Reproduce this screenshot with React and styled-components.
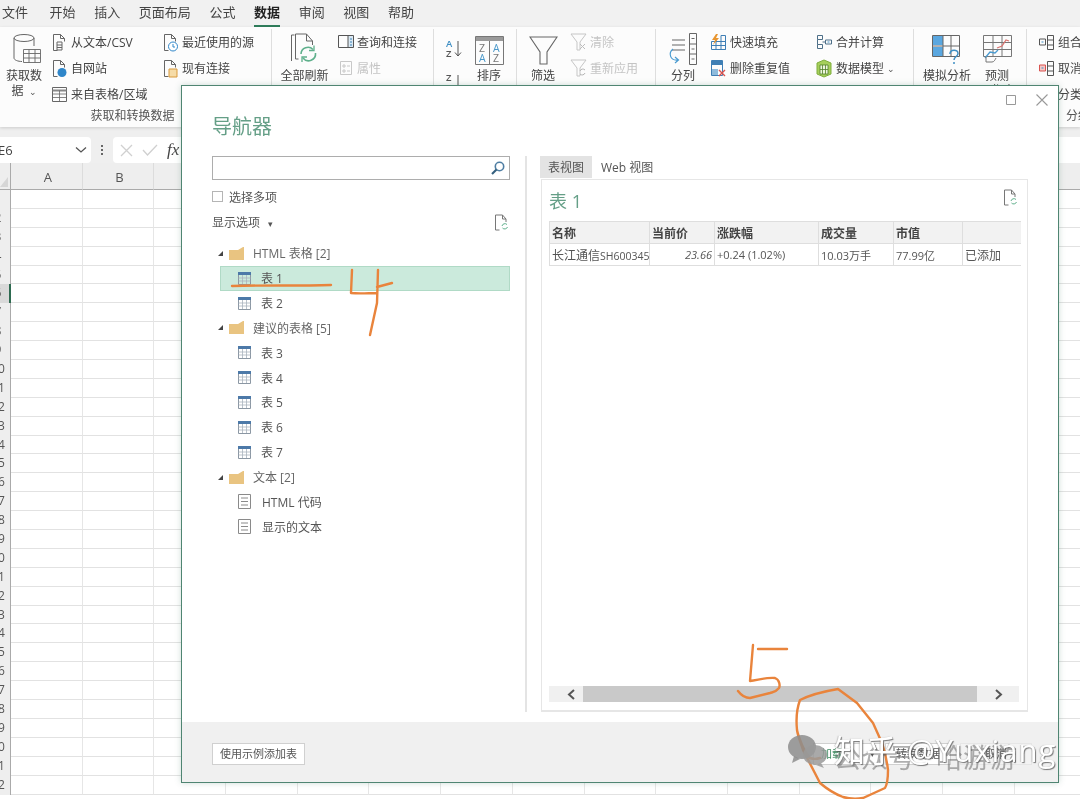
import React from "react";
import styled, { createGlobalStyle } from "styled-components";

const GlobalStyle = createGlobalStyle`
  html, body { margin: 0; padding: 0; background: #fff; }
  body {
    font-family: "Open Sans", "Noto Sans CJK SC", sans-serif;
    font-size: 12px;
    color: #444;
  }
`;

const Page = styled.div`
  position: relative;
  width: 1080px;
  height: 799px;
  overflow: hidden;
  display: flex;
  flex-direction: column;
  background: #fff;
  filter: blur(0.4px);
`;

/* menu tabs */
const TabBar = styled.div`
  height: 27px;
  flex: none;
  display: flex;
  align-items: flex-start;
  gap: 18.6px;
  padding-left: 2px;
  background: #f1f1f1;
`;
const Tab = styled.div`
  height: 25px;
  line-height: 24px;
  font-size: 13px;
  color: ${(p) => (p.$active ? "#222" : "#444")};
  font-weight: ${(p) => (p.$active ? 700 : 400)};
  border-bottom: ${(p) => (p.$active ? "2px solid #2f7d5b" : "2px solid transparent")};
  &:first-child { margin-right: 3px; }
`;

/* ribbon */
const Ribbon = styled.div`
  height: 100px;
  flex: none;
  display: flex;
  padding-top: 2px;
  box-sizing: border-box;
  background: #fcfcfc;
  overflow: hidden;
  box-shadow: 0 1px 3px rgba(0, 0, 0, 0.15);
  position: relative;
`;
const Group = styled.div`
  width: ${(p) => p.$w}px;
  flex: none;
  display: flex;
  flex-direction: column;
  border-right: 1px solid #dedede;
  box-sizing: border-box;
  &:last-child { border-right: none; }
`;
const GroupBody = styled.div`
  height: 78px;
  display: flex;
  padding-left: ${(p) => p.$pad || 0}px;
`;
const GroupLabel = styled.div`
  height: 18px;
  line-height: 18px;
  text-align: center;
  padding-right: ${(p) => p.$shift || 0}px;
  color: #555;
  white-space: nowrap;
`;
const BigButton = styled.div`
  width: ${(p) => p.$w || 40}px;
  margin-left: ${(p) => p.$ml || 0}px;
  flex: none;
  text-align: center;
  line-height: 15px;
  color: #444;
`;
const BigIcon = styled.div`
  height: 36px;
  padding-bottom: 3px;
  display: flex;
  align-items: flex-end;
  justify-content: center;
`;
const SmallCol = styled.div`
  width: ${(p) => p.$w}px;
  margin-left: ${(p) => p.$ml || 0}px;
  flex: none;
`;
const SmallItem = styled.div`
  height: 26px;
  display: flex;
  align-items: center;
  white-space: nowrap;
  padding-left: ${(p) => p.$indent || 0}px;
  color: ${(p) => (p.$off ? "#c4c4c4" : "#444")};
`;
const IconSlot = styled.span`
  width: ${(p) => p.$w || 17}px;
  margin-right: 3px;
  flex: none;
  display: flex;
  justify-content: center;
`;
const SortSlot = styled.div`
  height: 34px;
  padding-top: 5px;
  box-sizing: border-box;
  display: flex;
  align-items: center;
  justify-content: center;
`;
const Caret = styled.span`
  display: inline-block;
  margin-left: ${(p) => p.$ml || 5}px;
  font-size: 9px;
  color: #555;
`;

/* formula bar + sheet */
const FormulaBar = styled.div`
  height: 36px;
  flex: none;
  display: flex;
  align-items: flex-end;
  background: #efefef;
`;
const NameBox = styled.div`
  width: 91px;
  height: 26px;
  flex: none;
  box-sizing: border-box;
  background: #fff;
  border-radius: 0 4px 4px 0;
  display: flex;
  align-items: center;
  justify-content: space-between;
  padding-right: 4px;
  font-size: 13px;
  color: #444;
  overflow: hidden;
`;
const NameText = styled.span`
  margin-left: -2px;
`;
const Dots = styled.div`
  width: 22px;
  height: 26px;
  flex: none;
  display: flex;
  flex-direction: column;
  align-items: center;
  justify-content: center;
  gap: 2px;
  span { width: 2px; height: 2px; background: #666; }
`;
const FormulaBox = styled.div`
  flex: 1;
  height: 26px;
  background: #fff;
  border-radius: 4px 0 0 4px;
  display: flex;
  align-items: center;
  gap: 9px;
  padding-left: 7px;
`;
const Fx = styled.span`
  font-family: "Liberation Serif", serif;
  font-style: italic;
  font-size: 17px;
  color: #444;
`;
const Sheet = styled.div`
  flex: 1;
  display: grid;
  grid-template-columns: 11px repeat(15, 71.7px);
  grid-template-rows: 27px;
  grid-auto-rows: 18.9px;
  overflow: hidden;
`;
const Corner = styled.div`
  background: #eee;
  border-right: 1px solid #aaa;
  border-bottom: 1px solid #aaa;
  box-sizing: border-box;
  display: flex;
  align-items: flex-end;
  padding-bottom: 2px;
  &::before {
    content: "";
    border-style: solid;
    border-width: 0 0 10px 8px;
    border-color: transparent transparent #d6d6d6 transparent;
  }
`;
const ColHead = styled.div`
  background: #eee;
  border-right: 1px solid #dcdcdc;
  border-bottom: 1px solid #aaa;
  box-sizing: border-box;
  text-align: center;
  line-height: 29px;
  padding-left: 3px;
  font-size: 13px;
  color: #555;
`;
const RowHead = styled.div`
  background: ${(p) => (p.$active ? "#d9d9d9" : "#eee")};
  border-right: ${(p) => (p.$active ? "2px solid #2d6a50" : "1px solid #aaa")};
  box-sizing: border-box;
  overflow: hidden;
`;
const RowNum = styled.div`
  width: 26px;
  margin-left: -15px;
  text-align: center;
  line-height: 18px;
  color: #555;
`;
const Cell = styled.div`
  border-right: 1px solid #e6e6e6;
  border-bottom: 1px solid #e2e2e2;
  box-sizing: border-box;
`;

/* navigator dialog */
const Dialog = styled.div`
  position: absolute;
  left: 181px;
  top: 85px;
  width: 878px;
  height: 698px;
  box-sizing: border-box;
  border: 1px solid #4f8572;
  background: #fff;
  box-shadow: 0 0 6px rgba(60, 110, 90, 0.25);
  display: flex;
  flex-direction: column;
`;
const WindowButtons = styled.div`
  position: absolute;
  top: 8px;
  right: 10px;
  display: flex;
  gap: 20px;
  align-items: center;
`;
const DialogMain = styled.div`
  flex: 1;
  padding: 27px 0 10px 30px;
  display: flex;
  flex-direction: column;
  min-height: 0;
`;
const DialogTitle = styled.div`
  height: 28px;
  line-height: 28px;
  font-size: 20px;
  color: #659f87;
  margin-bottom: 15px;
`;
const Panes = styled.div`
  flex: 1;
  display: flex;
  min-height: 0;
`;
const LeftPane = styled.div`
  width: 298px;
  flex: none;
`;
const PaneDivider = styled.div`
  width: 2px;
  margin: 0 15px;
  flex: none;
  background: #e4e4e4;
`;
const RightPane = styled.div`
  width: 487px;
  margin-left: -1px;
  flex: none;
  display: flex;
  flex-direction: column;
`;
const SearchBox = styled.div`
  height: 24px;
  box-sizing: border-box;
  border: 1px solid #adadad;
  display: flex;
  align-items: center;
  justify-content: flex-end;
  padding-right: 3px;
`;
const CheckRow = styled.div`
  height: 19px;
  margin-top: 7px;
  display: flex;
  align-items: center;
  gap: 6px;
  color: #555;
`;
const CheckBox = styled.span`
  width: 11px;
  height: 11px;
  box-sizing: border-box;
  border: 1px solid #b5b5b5;
  background: #fff;
`;
const OptionsRow = styled.div`
  height: 20px;
  margin-top: 6px;
  display: flex;
  align-items: center;
  justify-content: space-between;
  padding-right: 1px;
  color: #555;
`;
const Tree = styled.div`
  margin-top: 9px;
`;
const FolderRow = styled.div`
  height: 24.85px;
  display: flex;
  align-items: center;
  padding-left: 6px;
  color: #666;
`;
const FolderLabel = styled.span`
  margin-left: 9px;
`;
const Tri = styled.span`
  border-style: solid;
  border-width: 0 0 5px 5px;
  border-color: transparent transparent #444 transparent;
  margin-right: 6px;
`;
const LeafRow = styled.div`
  height: 24.85px;
  box-sizing: border-box;
  margin-left: 8px;
  display: flex;
  align-items: center;
  padding-left: 17px;
  gap: 10px;
  color: #555;
  background: ${(p) => (p.$selected ? "#cbeadc" : "transparent")};
  border: 1px solid ${(p) => (p.$selected ? "#b0dac6" : "transparent")};
`;
const ViewTabs = styled.div`
  height: 23px;
  margin-left: -1px;
  display: flex;
  flex: none;
`;
const ViewTab = styled.div`
  height: 22px;
  line-height: 23px;
  padding: 0 ${(p) => (p.$active ? "8px" : "9px")};
  background: ${(p) => (p.$active ? "#e3e3e3" : "transparent")};
  color: #555;
`;
const Preview = styled.div`
  flex: 1;
  border: 1px solid #e6e6e6;
  border-bottom-width: 2px;
  display: flex;
  flex-direction: column;
  padding: 9px 8px 8px 7px;
  min-height: 0;
`;
const PreviewHead = styled.div`
  height: 32px;
  display: flex;
  justify-content: space-between;
  align-items: flex-start;
  padding-right: 1px;
`;
const PreviewTitle = styled.div`
  font-size: 18px;
  line-height: 24px;
  color: #659f87;
`;
const DataTable = styled.table`
  width: 471px;
  border-collapse: collapse;
  table-layout: fixed;
`;
const Th = styled.th`
  height: 21px;
  padding: 0 2px;
  background: #f2f2f2;
  border: 1px solid #dedede;
  border-left: ${(p) => (p.$first ? "1px solid #dedede" : "none")};
  border-right: ${(p) => (p.$last ? "none" : "1px solid #dedede")};
  text-align: left;
  font-weight: 700;
  font-size: 12px;
  color: #444;
`;
const Td = styled.td`
  height: 21px;
  padding: 0 2px;
  border-bottom: 1px solid #dedede;
  border-left: ${(p) => (p.$first ? "1px solid #dedede" : "none")};
  border-right: ${(p) => (p.$last ? "none" : "1px solid #dedede")};
  white-space: nowrap;
  overflow: hidden;
  color: #555;
  font-size: ${(p) => p.$size || 12}px;
  text-align: ${(p) => (p.$num ? "right" : "left")};
  font-style: ${(p) => (p.$num ? "italic" : "normal")};
`;
const Ticker = styled.span`
  font-size: 10.5px;
`;
const ScrollBar = styled.div`
  margin-top: auto;
  height: 16px;
  width: 470px;
  flex: none;
  display: flex;
  align-items: stretch;
  background: #f0f0f0;
`;
const ScrollArrow = styled.div`
  width: ${(p) => p.$w}px;
  flex: none;
  display: flex;
  align-items: center;
  justify-content: ${(p) => (p.$right ? "center" : "flex-end")};
  padding-right: ${(p) => (p.$right ? 0 : 7)}px;
  box-sizing: border-box;
`;
const ScrollThumb = styled.div`
  flex: 1;
  background: #c9c9c9;
`;
const DialogFooter = styled.div`
  height: 60px;
  flex: none;
  box-sizing: border-box;
  background: #f0f0f0;
  display: flex;
  align-items: center;
  padding: 4px 23px 0 30px;
`;
const FooterButton = styled.div`
  height: 22px;
  box-sizing: border-box;
  border: 1px solid ${(p) => (p.$flat ? "#e6e6e6" : "#d0d0d0")};
  background: ${(p) => (p.$flat ? "#f3f3f3" : "#fff")};
  line-height: 20px;
  font-size: 11px;
  text-align: center;
  width: ${(p) => p.$w}px;
  margin-left: ${(p) => p.$ml || 0}px;
  color: ${(p) => (p.$primary ? "#3c8a60" : "#555")};
  display: flex;
  align-items: center;
  justify-content: center;
  gap: 22px;
`;

/* things laid over the screenshot */
const Marks = styled.svg`
  position: absolute;
  left: 0;
  top: 0;
  pointer-events: none;
`;
const Watermark = styled.div`
  position: absolute;
  left: 787px;
  top: 733px;
  width: 280px;
  height: 44px;
  pointer-events: none;
`;
const WatermarkGrey = styled.div`
  position: absolute;
  left: 47px;
  top: 7px;
  font-size: 27px;
  line-height: 36px;
  white-space: nowrap;
  color: rgba(110, 110, 110, 0.55);
`;
const WatermarkWhite = styled.div`
  position: absolute;
  left: 47px;
  top: -3px;
  font-size: 31px;
  line-height: 40px;
  letter-spacing: 1px;
  white-space: nowrap;
  color: #fff;
  text-shadow: 1px 1px 1px rgba(80, 80, 80, 0.75), -1px 0 1px rgba(120, 120, 120, 0.35);
`;

/* icons */
const Doc = ({ children }) => (
  <svg width="17" height="19" viewBox="0 0 17 19" fill="none">
    <path d="M2.5 17.5v-16h7l4 4v3M9.5 1.5v4h4M2.5 17.5h4" stroke="#666" />
    {children}
  </svg>
);
const DatabaseIcon = () => (
  <svg width="36" height="32" viewBox="-6 0 36 32" fill="none" stroke="#666">
    <ellipse cx="12" cy="5" rx="10" ry="3.5" />
    <path d="M2 5v20c0 2 4 3.5 8 3.5M22 5v8" />
    <path d="M11.5 16.5h17v13h-17zM11.5 20.500h17M17 16.500v13M23 16.500v13M11.500 25h17" strokeWidth=".9" />
  </svg>
);
const TableAreaIcon = () => (
  <svg width="17" height="17" viewBox="0 0 17 17" fill="none" stroke="#666">
    <path d="M1.500 1.500h14v14h-14z" />
    <path d="M1.500 4.500h14" stroke="#888" strokeWidth="2" />
    <path d="M1.500 8h14M1.500 11.500h14M8.500 4.500v11" strokeWidth=".8" />
  </svg>
);
const RefreshIcon = () => (
  <svg width="32" height="32" viewBox="0 0 32 32" fill="none">
    <path d="M2.500 28v-26h3" stroke="#666" />
    <path d="M6.500 26v-25h11l6 7v4M17.500 1v7h6M6.500 26h3" stroke="#666" />
    <path d="M12 21a7 7 0 0 1 12-4.500M26.500 20a7 7 0 0 1-12.500 5" stroke="#5fb08c" strokeWidth="1.600" />
    <path d="M25 12.500v5h-5M13 29v-5h5" stroke="#5fb08c" strokeWidth="1.300" />
  </svg>
);
const QueryIcon = () => (
  <svg width="16" height="14" viewBox="0 0 16 14" fill="none">
    <path d="M.5.500h15v12h-15z" stroke="#555" />
    <path d="M10 1h5v11h-5z" fill="#d9e8f3" />
    <path d="M10 .5v12" stroke="#555" />
    <path d="M12 4h2M12 7h2M12 10h2" stroke="#3b82b8" />
  </svg>
);
const PropsIcon = () => (
  <svg width="14" height="16" viewBox="0 0 14 16" fill="none" stroke="#c8c8c8">
    <path d="M1.500 1.500h11v13h-11z" />
    <path d="M4 5h2v2h-2zM4 10h2v2h-2zM8 6h3M8 11h3" />
  </svg>
);
const SortAzIcon = ({ flip }) => (
  <svg width="17" height="20" viewBox="0 0 17 20" fontFamily="Open Sans, sans-serif" fontSize="9.500" fontWeight="600">
    <text x="0" y="8" fill={flip ? "#555" : "#3f8fc4"}>{flip ? "Z" : "A"}</text>
    <text x="0" y="18" fill={flip ? "#3f8fc4" : "#555"}>{flip ? "A" : "Z"}</text>
    <path d="M12 2v15M9 13.500l3 3.500 3-3.500" stroke="#555" fill="none" />
  </svg>
);
const SortBigIcon = () => (
  <svg width="29" height="29" viewBox="0 0 29 29" fill="none" fontFamily="Open Sans, sans-serif" fontSize="10.500">
    <path d="M.5.500h28v28h-28z" stroke="#777" />
    <path d="M1 1h27v4h-27z" fill="#9a9a9a" />
    <path d="M14.500 5v23" stroke="#777" />
    <text x="4" y="15.500" fill="#777">Z</text>
    <text x="4" y="26" fill="#4a98ca">A</text>
    <text x="18" y="15.500" fill="#4a98ca">A</text>
    <text x="18" y="26" fill="#777">Z</text>
  </svg>
);
const FunnelIcon = () => (
  <svg width="29" height="29" viewBox="0 0 29 29" fill="none" stroke="#666" strokeWidth="1.100">
    <path d="M1 1h27l-10 15v12h-7v-12z" />
  </svg>
);
const ClearFilterIcon = () => (
  <svg width="17" height="18" viewBox="0 0 17 18" fill="none" stroke="#c6c6c6">
    <path d="M1 1h15l-6 8v8h-3v-8z" />
    <path d="M10 11l5 5M15 11l-5 5" stroke="#bdbdbd" />
  </svg>
);
const ReapplyIcon = () => (
  <svg width="17" height="18" viewBox="0 0 17 18" fill="none" stroke="#c6c6c6">
    <path d="M1 1h15l-6 8v8h-3v-8z" />
    <path d="M10 12a3 3 0 0 1 5-1M15 14a3 3 0 0 1-5 1" stroke="#b4b4b4" />
  </svg>
);
const SplitIcon = () => (
  <svg width="30" height="33" viewBox="0 0 30 33" fill="none">
    <path d="M4 8h13M4 13h13M4 18h13" stroke="#666" />
    <path d="M21.500 1.500h7v31h-7zM21.500 12h7M21.500 22h7" stroke="#666" />
    <path d="M23.500 6.500h3M23.500 17h3M23.500 27h3" stroke="#666" />
    <path d="M5 17c-5 4-3 12 5 11M7 25l3.500 3-3.500 3" stroke="#4a9bd0" strokeWidth="1.200" />
  </svg>
);
const FlashIcon = () => (
  <svg width="17" height="17" viewBox="0 0 17 17" fill="none">
    <path d="M1.500 7.500h14v8h-14zM1.500 11.500h14M6 4v11.500M11 1.500v14M11 1.500h4.500v14" stroke="#3f7fb5" />
    <path d="M6 0l-4 6h3l-2 5 6-7h-3l2-4z" fill="#e8952f" />
  </svg>
);
const DedupeIcon = () => (
  <svg width="17" height="18" viewBox="0 0 17 18" fill="none">
    <path d="M1.500 1.500h11v15h-11z" stroke="#3f7fb5" />
    <path d="M2 2h10v4h-10z" fill="#3f7fb5" />
    <path d="M2 10h6v6h-6z" fill="#8fbbdc" />
    <path d="M9 11l6 6M15 11l-6 6" stroke="#d9534f" strokeWidth="1.400" />
  </svg>
);
const ConsolidateIcon = () => (
  <svg width="17" height="16" viewBox="0 0 17 16" fill="none" stroke="#4d6f88">
    <path d="M1.500 1.500h5v4h-5zM1.500 10.500h5v4h-5zM9.500 6h6v4h-6zM6.500 8h3M1.500 5.500v5" />
    <path d="M11.500 8h2" stroke="#3f8fc4" />
  </svg>
);
const ModelIcon = () => (
  <svg width="18" height="19" viewBox="0 0 18 19" fill="none">
    <path d="M2 4l7-3 7 3v11l-7 3-7-3z" fill="#a6cf5b" stroke="#7fae3c" />
    <path d="M5 6h8v9h-8z" fill="#eef6dd" stroke="#4f7f2a" strokeWidth=".8" />
    <path d="M7.500 6v9M10.500 6v9M5 10.500h8" stroke="#4f7f2a" strokeWidth=".8" />
  </svg>
);
const WhatIfIcon = () => (
  <svg width="30" height="31" viewBox="0 0 30 31" fill="none">
    <path d="M1 2h10v9h-10zM1 13h10v9h-10z" fill="#5aa7e0" />
    <path d="M.5 1.500h27v21h-27zM.5 12h27M11 1.500v21M19 1.500v21" stroke="#666" />
    <path d="M18 20c0-5 8-5 8-.5 0 3-4 3-4 6.500" stroke="#3f8fc4" strokeWidth="1.500" />
    <path d="M22 28v2" stroke="#3f8fc4" strokeWidth="1.500" />
  </svg>
);
const ForecastIcon = () => (
  <svg width="29" height="31" viewBox="0 0 29 31" fill="none">
    <path d="M.5 1.500h28v21h-28zM.5 8.500h28M.5 15.500h28M10 1.500v21M19 1.500v21" stroke="#777" />
    <path d="M14 14l5-2 4-6 3 1" stroke="#d9736f" strokeWidth="1.300" />
    <path d="M2 24l5-6 5 1 3-3" stroke="#4a9bd0" strokeWidth="1.300" />
    <path d="M3 23v5h6c2 0 3-2 4-4" stroke="#777" />
  </svg>
);
const GroupIcon = ({ red }) => (
  <svg width="17" height="17" viewBox="0 0 17 17" fill="none">
    <path d="M1.500 5h6v6h-6z" stroke={red ? "#d9534f" : "#555"} fill={red ? "#f4c7c5" : "none"} />
    <path d="M3.500 8h2" stroke="#3f8fc4" />
    <path d="M9.500 1.500h6v14h-6zM9.500 6h6M9.500 11h6" stroke="#555" />
  </svg>
);
const TableIcon = () => (
  <svg width="13" height="13" viewBox="0 0 13 13" fill="none">
    <path d="M.5.500h12v12h-12z" stroke="#8b97a3" />
    <path d="M0 0h13v3h-13z" fill="#4c79a8" />
    <path d="M4.500 3v9M8.500 3v9M.5 6h12M.5 9h12" stroke="#a9b4be" strokeWidth=".8" />
  </svg>
);
const TextIcon = () => (
  <svg width="14" height="15" viewBox="0 0 14 15" fill="none" stroke="#8a8a8a">
    <path d="M.5.500h12v14h-12z" />
    <path d="M3 4h7M3 7.500h7M3 11h7" />
  </svg>
);
const FolderIcon = () => (
  <svg width="15" height="13" viewBox="0 0 15 13">
    <path d="M0 3h9l5-3h1v13h-15z" fill="#e9c481" />
  </svg>
);
const SearchIcon = () => (
  <svg width="16" height="16" viewBox="0 0 16 16" fill="none">
    <circle cx="9.500" cy="6.500" r="4.200" stroke="#4f7ea3" strokeWidth="1.600" />
    <path d="M6.500 9.500l-4.500 4.500" stroke="#35607f" strokeWidth="2.200" />
  </svg>
);
const DocRefresh = () => (
  <svg width="15" height="17" viewBox="0 0 15 17" fill="none">
    <path d="M1.500 16v-15h7l3.500 4v3M8.500 1v4h3.500M1.500 16h4" stroke="#777" />
    <path d="M8 12a3 3 0 0 1 5-1.500M13.500 13a3 3 0 0 1-5 1" stroke="#5fb08c" />
  </svg>
);
const Chevron = () => (
  <svg width="12" height="8" viewBox="0 0 12 8" fill="none" stroke="#555" strokeWidth="1.300">
    <path d="M1 1.500l5 4.500 5-4.500" />
  </svg>
);
const CrossMark = () => (
  <svg width="13" height="13" viewBox="0 0 13 13" fill="none" stroke="#d0d0d0" strokeWidth="1.300">
    <path d="M1 1l11 11M12 1l-11 11" />
  </svg>
);
const CheckMark = () => (
  <svg width="16" height="12" viewBox="0 0 16 12" fill="none" stroke="#d0d0d0" strokeWidth="1.300">
    <path d="M1 6l4.500 5 9.500-10" />
  </svg>
);
const MaxIcon = () => (
  <svg width="10" height="10" viewBox="0 0 10 10" fill="none" stroke="#999">
    <path d="M.5.500h9v9h-9z" />
  </svg>
);
const CloseIcon = () => (
  <svg width="12" height="12" viewBox="0 0 12 12" fill="none" stroke="#999" strokeWidth="1.100">
    <path d="M.5.500l11 11M11.500.500l-11 11" />
  </svg>
);
const ArrowIcon = ({ right }) => (
  <svg width="9" height="11" viewBox="0 0 9 11" fill="none" stroke="#555" strokeWidth="2">
    <path d={right ? "M2 1l5 4.500-5 4.500" : "M7 1l-5 4.500 5 4.500"} />
  </svg>
);
const WechatIcon = () => (
  <svg width="42" height="36" viewBox="0 0 42 36">
    <ellipse cx="15" cy="14" rx="14" ry="12" fill="#8d8d8d" fillOpacity=".85" />
    <path d="M7 23l-2 7 8-4z" fill="#8d8d8d" fillOpacity=".85" />
    <ellipse cx="28" cy="22" rx="12" ry="10" fill="#9a9a9a" fillOpacity=".85" />
    <path d="M34 30l3 5-8-3z" fill="#9a9a9a" fillOpacity=".85" />
  </svg>
);

const tabs = ["文件", "开始", "插入", "页面布局", "公式", "数据", "审阅", "视图", "帮助"];
const columns = "ABCDEFGHIJKLMNO".split("");
const rowNumbers = Array.from({ length: 32 }, (_, i) => i + 1);
const suggested = ["表 3", "表 4", "表 5", "表 6", "表 7"];

const ScribbleMarks = () => (
  <Marks width="1080" height="799" viewBox="0 0 1080 799" fill="none" stroke="#e9843c" strokeWidth="2.400" strokeLinecap="round" strokeLinejoin="round">
    <path d="M232 286c30-1 65 0 99-1" />
    <path d="M352 270l-1 23c9 1 18 0 26 0M378 270l-1 33-7 32M377 287l15-4" />
    <path d="M758 649l29 0M753 645l-3 36c8-1 18-4 25-3 5 2 5 8 4 10-3 4-6 4-9 5l-20 5c-5 0-9-3-12-7" />
    <path d="M838 689c-12 2-28 6-38 11-3 8-4 20-3 30 1 7 4 13 6 20l17 33c7 6 15 11 23 14 7 2 14 2 20 1l22-10c3-5 3-12 3-18-1-9-3-18-6-27l-9-20-16-20zM797 730c1 5 3 10 5 15 2 5 5 9 8 13 3 1 7 1 10 0" />
  </Marks>
);

export default function App() {
  return (
    <Page>
      <GlobalStyle />
      <TabBar>
        {tabs.map((t) => (
          <Tab key={t} $active={t === "数据"}>{t}</Tab>
        ))}
      </TabBar>

      <Ribbon>
        <Group $w={272}>
          <GroupBody $pad={4}>
            <BigButton>
              <BigIcon><DatabaseIcon /></BigIcon>
              获取数据<Caret>⌄</Caret>
            </BigButton>
            <SmallCol $ml={7} $w={111}>
              <SmallItem><IconSlot><Doc><path d="M6 9h5v8h-5zM6 12h5M6 14.500h5" stroke="#666" /></Doc></IconSlot>从文本/CSV</SmallItem>
              <SmallItem><IconSlot><Doc><circle cx="11" cy="13.500" r="4.500" fill="#2f86c9" /></Doc></IconSlot>自网站</SmallItem>
              <SmallItem><IconSlot><TableAreaIcon /></IconSlot>来自表格/区域</SmallItem>
            </SmallCol>
            <SmallCol $w={100}>
              <SmallItem><IconSlot><Doc><circle cx="11" cy="13.500" r="4.500" fill="#fff" stroke="#2f86c9" /><path d="M11 11v3h2" stroke="#2f86c9" /></Doc></IconSlot>最近使用的源</SmallItem>
              <SmallItem><IconSlot><Doc><path d="M7 10h8v8h-8z" fill="#f6dca8" stroke="#d99a3c" /></Doc></IconSlot>现有连接</SmallItem>
            </SmallCol>
          </GroupBody>
          <GroupLabel $shift={6}>获取和转换数据</GroupLabel>
        </Group>

        <Group $w={162}>
          <GroupBody>
            <BigButton $w={65}>
              <BigIcon><RefreshIcon /></BigIcon>
              全部刷新
            </BigButton>
            <SmallCol $w={95}>
              <SmallItem><IconSlot><QueryIcon /></IconSlot>查询和连接</SmallItem>
              <SmallItem $off><IconSlot><PropsIcon /></IconSlot>属性</SmallItem>
            </SmallCol>
          </GroupBody>
          <GroupLabel>查询和连接</GroupLabel>
        </Group>

        <Group $w={83}>
          <GroupBody $pad={10}>
            <SmallCol $w={20}>
              <SortSlot><SortAzIcon /></SortSlot>
              <SortSlot><SortAzIcon flip /></SortSlot>
            </SmallCol>
            <BigButton $ml={5} $w={40}>
              <BigIcon><SortBigIcon /></BigIcon>
              排序
            </BigButton>
          </GroupBody>
          <GroupLabel />
        </Group>

        <Group $w={139}>
          <GroupBody $pad={6}>
            <BigButton>
              <BigIcon><FunnelIcon /></BigIcon>
              筛选
            </BigButton>
            <SmallCol $ml={7} $w={80}>
              <SmallItem $off><IconSlot><ClearFilterIcon /></IconSlot>清除</SmallItem>
              <SmallItem $off><IconSlot><ReapplyIcon /></IconSlot>重新应用</SmallItem>
            </SmallCol>
          </GroupBody>
          <GroupLabel>排序和筛选</GroupLabel>
        </Group>

        <Group $w={258}>
          <GroupBody $pad={7}>
            <BigButton>
              <BigIcon><SplitIcon /></BigIcon>
              分列
            </BigButton>
            <SmallCol $ml={7} $w={105}>
              <SmallItem><IconSlot><FlashIcon /></IconSlot>快速填充</SmallItem>
              <SmallItem><IconSlot><DedupeIcon /></IconSlot>删除重复值</SmallItem>
            </SmallCol>
            <SmallCol $w={90}>
              <SmallItem><IconSlot $w={18}><ConsolidateIcon /></IconSlot>合并计算</SmallItem>
              <SmallItem><IconSlot $w={18}><ModelIcon /></IconSlot>数据模型<Caret $ml={3}>⌄</Caret></SmallItem>
            </SmallCol>
          </GroupBody>
          <GroupLabel>数据工具</GroupLabel>
        </Group>

        <Group $w={113}>
          <GroupBody $pad={9}>
            <BigButton $w={48}>
              <BigIcon><WhatIfIcon /></BigIcon>
              模拟分析
            </BigButton>
            <BigButton $ml={6}>
              <BigIcon><ForecastIcon /></BigIcon>
              预测<br />工作表
            </BigButton>
          </GroupBody>
          <GroupLabel>预测</GroupLabel>
        </Group>

        <Group $w={126}>
          <GroupBody $pad={11}>
            <SmallCol $w={100}>
              <SmallItem><IconSlot><GroupIcon /></IconSlot>组合</SmallItem>
              <SmallItem><IconSlot><GroupIcon red /></IconSlot>取消组合</SmallItem>
              <SmallItem $indent={20}>分类汇总</SmallItem>
            </SmallCol>
          </GroupBody>
          <GroupLabel>分级显示</GroupLabel>
        </Group>
      </Ribbon>

      <FormulaBar>
        <NameBox><NameText>E6</NameText><Chevron /></NameBox>
        <Dots><span /><span /><span /></Dots>
        <FormulaBox><CrossMark /><CheckMark /><Fx>fx</Fx></FormulaBox>
      </FormulaBar>

      <Sheet>
        <Corner />
        {columns.map((c) => <ColHead key={c}>{c}</ColHead>)}
        {rowNumbers.map((n) => (
          <React.Fragment key={n}>
            <RowHead $active={n === 6}><RowNum>{n}</RowNum></RowHead>
            {columns.map((c) => <Cell key={c} />)}
          </React.Fragment>
        ))}
      </Sheet>

      <Dialog>
        <WindowButtons><MaxIcon /><CloseIcon /></WindowButtons>
        <DialogMain>
          <DialogTitle>导航器</DialogTitle>
          <Panes>
            <LeftPane>
              <SearchBox><SearchIcon /></SearchBox>
              <CheckRow><CheckBox />选择多项</CheckRow>
              <OptionsRow>
                <span>显示选项<Caret $ml={8}>▾</Caret></span>
                <DocRefresh />
              </OptionsRow>
              <Tree>
                <FolderRow><Tri /><FolderIcon /><FolderLabel>HTML 表格 [2]</FolderLabel></FolderRow>
                <LeafRow $selected><TableIcon />表 1</LeafRow>
                <LeafRow><TableIcon />表 2</LeafRow>
                <FolderRow><Tri /><FolderIcon /><FolderLabel>建议的表格 [5]</FolderLabel></FolderRow>
                {suggested.map((s) => <LeafRow key={s}><TableIcon />{s}</LeafRow>)}
                <FolderRow><Tri /><FolderIcon /><FolderLabel>文本 [2]</FolderLabel></FolderRow>
                <LeafRow><TextIcon />HTML 代码</LeafRow>
                <LeafRow><TextIcon />显示的文本</LeafRow>
              </Tree>
            </LeftPane>
            <PaneDivider />
            <RightPane>
              <ViewTabs>
                <ViewTab $active>表视图</ViewTab>
                <ViewTab>Web 视图</ViewTab>
              </ViewTabs>
              <Preview>
                <PreviewHead>
                  <PreviewTitle>表 1</PreviewTitle>
                  <DocRefresh />
                </PreviewHead>
                <DataTable>
                  <colgroup>
                    <col width="100" /><col width="65" /><col width="104" /><col width="75" /><col width="69" /><col width="58" />
                  </colgroup>
                  <thead>
                    <tr>
                      <Th $first>名称</Th><Th>当前价</Th><Th>涨跌幅</Th><Th>成交量</Th><Th>市值</Th><Th $last />
                    </tr>
                  </thead>
                  <tbody>
                    <tr>
                      <Td $first>长江通信<Ticker>SH600345</Ticker></Td>
                      <Td $num $size={11}>23.66</Td>
                      <Td $size={11}>+0.24 (1.02%)</Td>
                      <Td $size={11}>10.03万手</Td>
                      <Td $size={11}>77.99亿</Td>
                      <Td $last>已添加</Td>
                    </tr>
                  </tbody>
                </DataTable>
                <ScrollBar>
                  <ScrollArrow $w={34}><ArrowIcon /></ScrollArrow>
                  <ScrollThumb />
                  <ScrollArrow $w={42} $right><ArrowIcon right /></ScrollArrow>
                </ScrollBar>
              </Preview>
            </RightPane>
          </Panes>
        </DialogMain>
        <DialogFooter>
          <FooterButton $w={93}>使用示例添加表</FooterButton>
          <FooterButton $primary $w={70} $ml={508}>加载<Caret>▾</Caret></FooterButton>
          <FooterButton $w={66} $ml={2}>转换数据</FooterButton>
          <FooterButton $flat $w={72} $ml={9}>取消</FooterButton>
        </DialogFooter>
      </Dialog>

      <ScribbleMarks />

      <Watermark>
        <WechatIcon />
        <WatermarkGrey>公众号 · 哈游游</WatermarkGrey>
        <WatermarkWhite>知乎 @Yuxiang</WatermarkWhite>
      </Watermark>
    </Page>
  );
}
